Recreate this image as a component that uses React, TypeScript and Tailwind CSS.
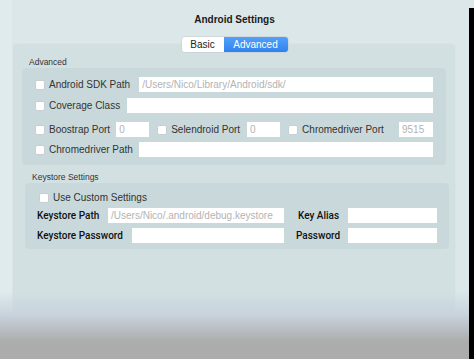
import React from 'react';

function Check() {
    return <div className="w-[10px] h-[10px] shrink-0 bg-white rounded-[2px] border border-[#c9cfd1]" />;
}

function Field({ value = '', className = '' }: { value?: string; className?: string }) {
    return (
        <div className={`h-[15px] bg-white flex items-center px-[3px] text-[10px] text-[#b3b3b3] overflow-hidden whitespace-nowrap ${className}`}>
            {value}
        </div>
    );
}

export default function App() {
    return (
        <div className="w-[474px] h-[359px] flex overflow-hidden bg-black" style={{ fontFamily: '"Liberation Sans", Arial, sans-serif' }}>
            <div className="relative w-[469px] h-full bg-[#dbe7e9] flex flex-col items-center">
                {/* Title */}
                <div className="pt-[12px] text-[10px] leading-[16px] font-bold text-[#1a1a1a]">Android Settings</div>

                {/* Segmented control */}
                <div className="relative z-10 mt-[9px] flex h-[15px] rounded-[3px] overflow-hidden shadow-[0_0_0_0.5px_#c4cacc] text-[10px]">
                    <div className="w-[42px] bg-white flex items-center justify-center text-[#222]">Basic</div>
                    <div className="w-[64px] bg-gradient-to-b from-[#54a0f8] to-[#2f82ef] flex items-center justify-center text-white">Advanced</div>
                </div>

                {/* Tab panel */}
                <div className="self-start ml-[13px] mt-[-8px] w-[442px] flex-1 bg-[#d3e0e2] rounded-t-[4px] pt-[13px] shadow-[0_0_0_1px_#d9e4e6]">
                    <div className="pl-[16px] text-[8.5px] leading-[11px] text-[#333]">Advanced</div>
                    <div className="ml-[9px] w-[424px] bg-[#c9d9db] rounded-[4px] pl-[13px] pr-[13px] pt-[9px] pb-[8px] text-[10px] text-[#333]">
                        <div className="flex items-center h-[15px]">
                            <Check />
                            <span className="ml-[4px]">Android SDK Path</span>
                            <Field value="/Users/Nico/Library/Android/sdk/" className="flex-1 ml-[9px]" />
                        </div>
                        <div className="flex items-center h-[15px] mt-[6px]">
                            <Check />
                            <span className="ml-[4px]">Coverage Class</span>
                            <Field className="flex-1 ml-[7px]" />
                        </div>
                        <div className="flex items-center h-[15px] mt-[9px]">
                            <Check />
                            <span className="ml-[4px]">Boostrap Port</span>
                            <Field value="0" className="w-[33px] ml-[6px]" />
                            <div className="ml-[8px]"><Check /></div>
                            <span className="ml-[4px]">Selendroid Port</span>
                            <Field value="0" className="w-[33px] ml-[7px]" />
                            <div className="ml-[8px]"><Check /></div>
                            <span className="ml-[4px]">Chromedriver Port</span>
                            <div className="flex-1" />
                            <Field value="9515" className="w-[34px]" />
                        </div>
                        <div className="flex items-center h-[15px] mt-[5px]">
                            <Check />
                            <span className="ml-[4px]">Chromedriver Path</span>
                            <Field className="flex-1 ml-[6px]" />
                        </div>
                    </div>

                    <div className="pl-[19px] mt-[7px] text-[8.5px] leading-[11px] text-[#333]">Keystore Settings</div>
                    <div className="ml-[12px] w-[424px] bg-[#c9d9db] rounded-[4px] pl-[12px] pr-[12px] pt-[9px] pb-[6px] text-[10px] text-[#111]">
                        <div className="flex items-center h-[11px] pl-[2px]">
                            <Check />
                            <span className="ml-[4px] text-[#333]">Use Custom Settings</span>
                        </div>
                        <div className="flex items-center h-[15px] mt-[5px]">
                            <span className="w-[71px] font-medium" style={{ fontFamily: 'Roboto, sans-serif' }}>Keystore Path</span>
                            <Field value="/Users/Nico/.android/debug.keystore" className="w-[176px]" />
                            <span className="ml-[14px] w-[50px] font-medium" style={{ fontFamily: 'Roboto, sans-serif' }}>Key Alias</span>
                            <Field className="flex-1" />
                        </div>
                        <div className="flex items-center h-[15px] mt-[5px]">
                            <span className="w-[95px] font-medium" style={{ fontFamily: 'Roboto, sans-serif' }}>Keystore Password</span>
                            <Field className="w-[152px]" />
                            <span className="ml-[12px] w-[52px] font-medium" style={{ fontFamily: 'Roboto, sans-serif' }}>Password</span>
                            <Field className="flex-1" />
                        </div>
                    </div>
                </div>

                {/* Left light strip */}
                <div className="absolute left-0 top-0 bottom-0 w-[12px] bg-[#e3ecee]/70" />
                {/* Bottom blur/fade */}
                <div className="absolute inset-x-0 bottom-0 h-[68px] bg-gradient-to-b from-transparent via-[#c8d3dd] via-35% to-[#acacac] to-75%" />
            </div>
            <div className="w-[5px] flex flex-col">
                <div className="h-[8px] bg-[#dbe7e9]" />
                <div className="flex-1 bg-black" />
            </div>
        </div>
    );
}
